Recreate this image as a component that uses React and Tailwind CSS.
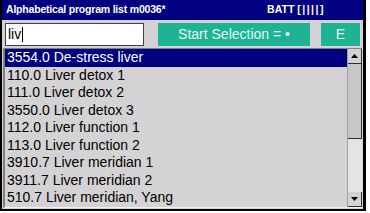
const rows = [
  "3554.0 De-stress liver",
  "110.0 Liver detox 1",
  "111.0 Liver detox 2",
  "3550.0 Liver detox 3",
  "112.0 Liver function 1",
  "113.0 Liver function 2",
  "3910.7 Liver meridian 1",
  "3911.7 Liver meridian 2",
  "510.7 Liver meridian, Yang",
];

export default function App() {
  return (
    <div className="w-[370px] h-[213px] bg-white font-['Liberation_Sans',Arial,sans-serif]">
      <div className="w-[366px] h-[211px] border-l-2 border-r-[3px] border-b-2 border-black bg-[#d4d2d4] flex flex-col">
        {/* title bar */}
        <div className="h-[20px] bg-[#000080] text-white text-[10.5px] font-bold flex items-center justify-between pl-[4px] pr-[38px] shrink-0">
          <span className="tracking-[-0.2px]">Alphabetical program list m0036*</span>
          <span>
            BATT <span className="tracking-[1.5px]">[||||]</span>
          </span>
        </div>

        {/* search row */}
        <div className="h-[28px] flex items-center pl-[3px] shrink-0">
          <div className="w-[139px] h-[23px] bg-white border border-[#404040] flex items-center pl-[2px] text-[14px] text-black">
            liv<span className="w-px h-[15px] bg-black ml-px"></span>
          </div>
          <div className="ml-[14px] w-[152px] h-[23px] bg-[#1db394] text-[#e6f7f2] text-[14px] flex items-center justify-center">
            Start Selection = •
          </div>
          <div className="ml-[11px] w-[39px] h-[23px] bg-[#1db394] text-[#e6f7f2] text-[14px] flex items-center justify-center">
            E
          </div>
        </div>

        {/* list */}
        <div className="flex-1 mx-[1px] mb-[2px] border-l-2 border-t border-[#808080] border-b border-b-[#f0f0f0] flex">
          <div className="flex-1 flex flex-col text-[14px] leading-[17px] text-black">
            {rows.map((r, i) => (
              <div
                key={r}
                className={
                  i === 0
                    ? "h-[17.5px] pl-[2px] bg-[#000080] text-white flex items-center"
                    : "h-[17.5px] pl-[2px] flex items-center"
                }
              >
                {r}
              </div>
            ))}
          </div>
          <div className="w-[15px] flex flex-col bg-[#e4e4e4] border-l border-[#a0a0a0]">
            <div className="h-[15px] bg-[#d4d2d4] border-r border-b border-[#303030] flex items-center justify-center">
              <svg width="7" height="4" viewBox="0 0 7 4">
                <path d="M3.5 0L7 4H0z" fill="#000" />
              </svg>
            </div>
            <div className="h-[75px] bg-[#c8c6c8] border-r border-b border-[#303030]"></div>
            <div className="flex-1"></div>
            <div className="h-[15px] bg-[#d4d2d4] border-r border-b border-[#303030] flex items-center justify-center">
              <svg width="7" height="4" viewBox="0 0 7 4">
                <path d="M0 0H7L3.5 4z" fill="#000" />
              </svg>
            </div>
          </div>
        </div>
      </div>
    </div>
  );
}
